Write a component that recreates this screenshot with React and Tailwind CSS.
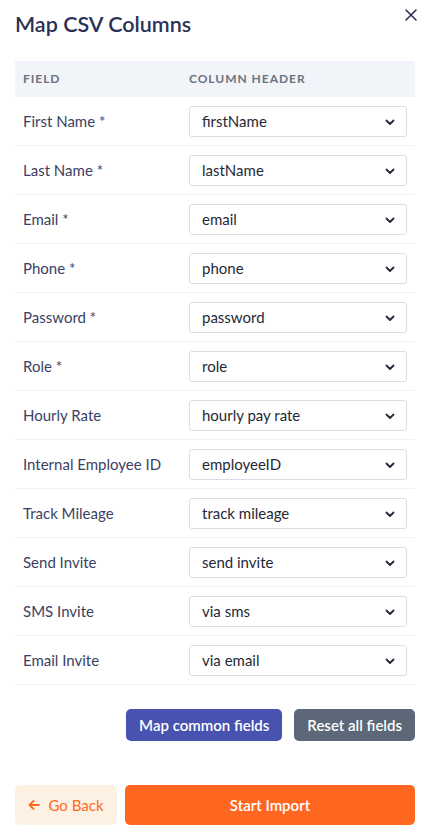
import React from "react";

const rows = [
  ["First Name *", "firstName"],
  ["Last Name *", "lastName"],
  ["Email *", "email"],
  ["Phone *", "phone"],
  ["Password *", "password"],
  ["Role *", "role"],
  ["Hourly Rate", "hourly pay rate"],
  ["Internal Employee ID", "employeeID"],
  ["Track Mileage", "track mileage"],
  ["Send Invite", "send invite"],
  ["SMS Invite", "via sms"],
  ["Email Invite", "via email"],
];

function Chevron() {
  return (
    <svg width="12" height="12" viewBox="0 0 12 12" fill="none">
      <path d="M2.5 4.5 L6 8 L9.5 4.5" stroke="#1f2937" strokeWidth="1.8" strokeLinecap="round" strokeLinejoin="round" />
    </svg>
  );
}

export default function App() {
  return (
    <div className="w-[424px] h-[832px] bg-white relative" style={{ fontFamily: "Lato, 'Noto Sans', sans-serif" }}>
      <button className="absolute right-[5px] top-[7px]">
        <svg width="16" height="16" viewBox="0 0 16 16" fill="none">
          <path d="M3 3 L13 13 M13 3 L3 13" stroke="#2c3157" strokeWidth="1.6" strokeLinecap="round" />
        </svg>
      </button>
      <div className="pl-[15px] pr-[9px] pt-[10px]">
        <h1 className="text-[21.5px] font-semibold text-[#2c3157] leading-[28px]">Map CSV Columns</h1>
        <div className="mt-[23px]">
          <div className="flex items-center h-[36px] bg-[#f1f4f8] text-[12px] font-bold tracking-[0.08em] text-[#6b7280] uppercase">
            <div className="w-[174px] pl-[8px]">Field</div>
            <div>Column Header</div>
          </div>
          {rows.map(([label, value]) => (
            <div key={label} className="flex items-center h-[49px] border-b border-[#f1f2f4] pt-[1px]">
              <div className="w-[174px] pl-[8px] text-[15px] text-[#3b3f63]">{label}</div>
              <div className="w-[218px] h-[31px] border border-[#dcdde6] rounded-[3px] flex items-center justify-between pl-[12px] pr-[10px] text-[15px] text-[#1f2937]">
                <span>{value}</span>
                <Chevron />
              </div>
            </div>
          ))}
        </div>
        <div className="flex justify-end gap-[12px] mt-[24px]">
          <button className="h-[32px] px-[13px] rounded-[5px] bg-[#4852b0] text-white text-[15px] font-semibold">Map common fields</button>
          <button className="h-[32px] px-[13px] rounded-[5px] bg-[#5c6778] text-white text-[15px] font-semibold">Reset all fields</button>
        </div>
        <div className="flex gap-[8px] mt-[44px]">
          <button className="w-[102px] h-[40px] rounded-[5px] bg-[#fdf1e4] text-[#ff6a21] text-[15px] flex items-center justify-center gap-[8px]">
            <svg width="12" height="12" viewBox="0 0 12 12" fill="none">
              <path d="M11 6 H1.5 M5.5 2 L1.5 6 L5.5 10" stroke="#ff6a21" strokeWidth="1.8" strokeLinecap="round" strokeLinejoin="round" />
            </svg>
            Go Back
          </button>
          <button className="flex-1 h-[40px] rounded-[5px] bg-[#ff6721] text-white text-[15px] font-semibold">Start Import</button>
        </div>
      </div>
    </div>
  );
}
